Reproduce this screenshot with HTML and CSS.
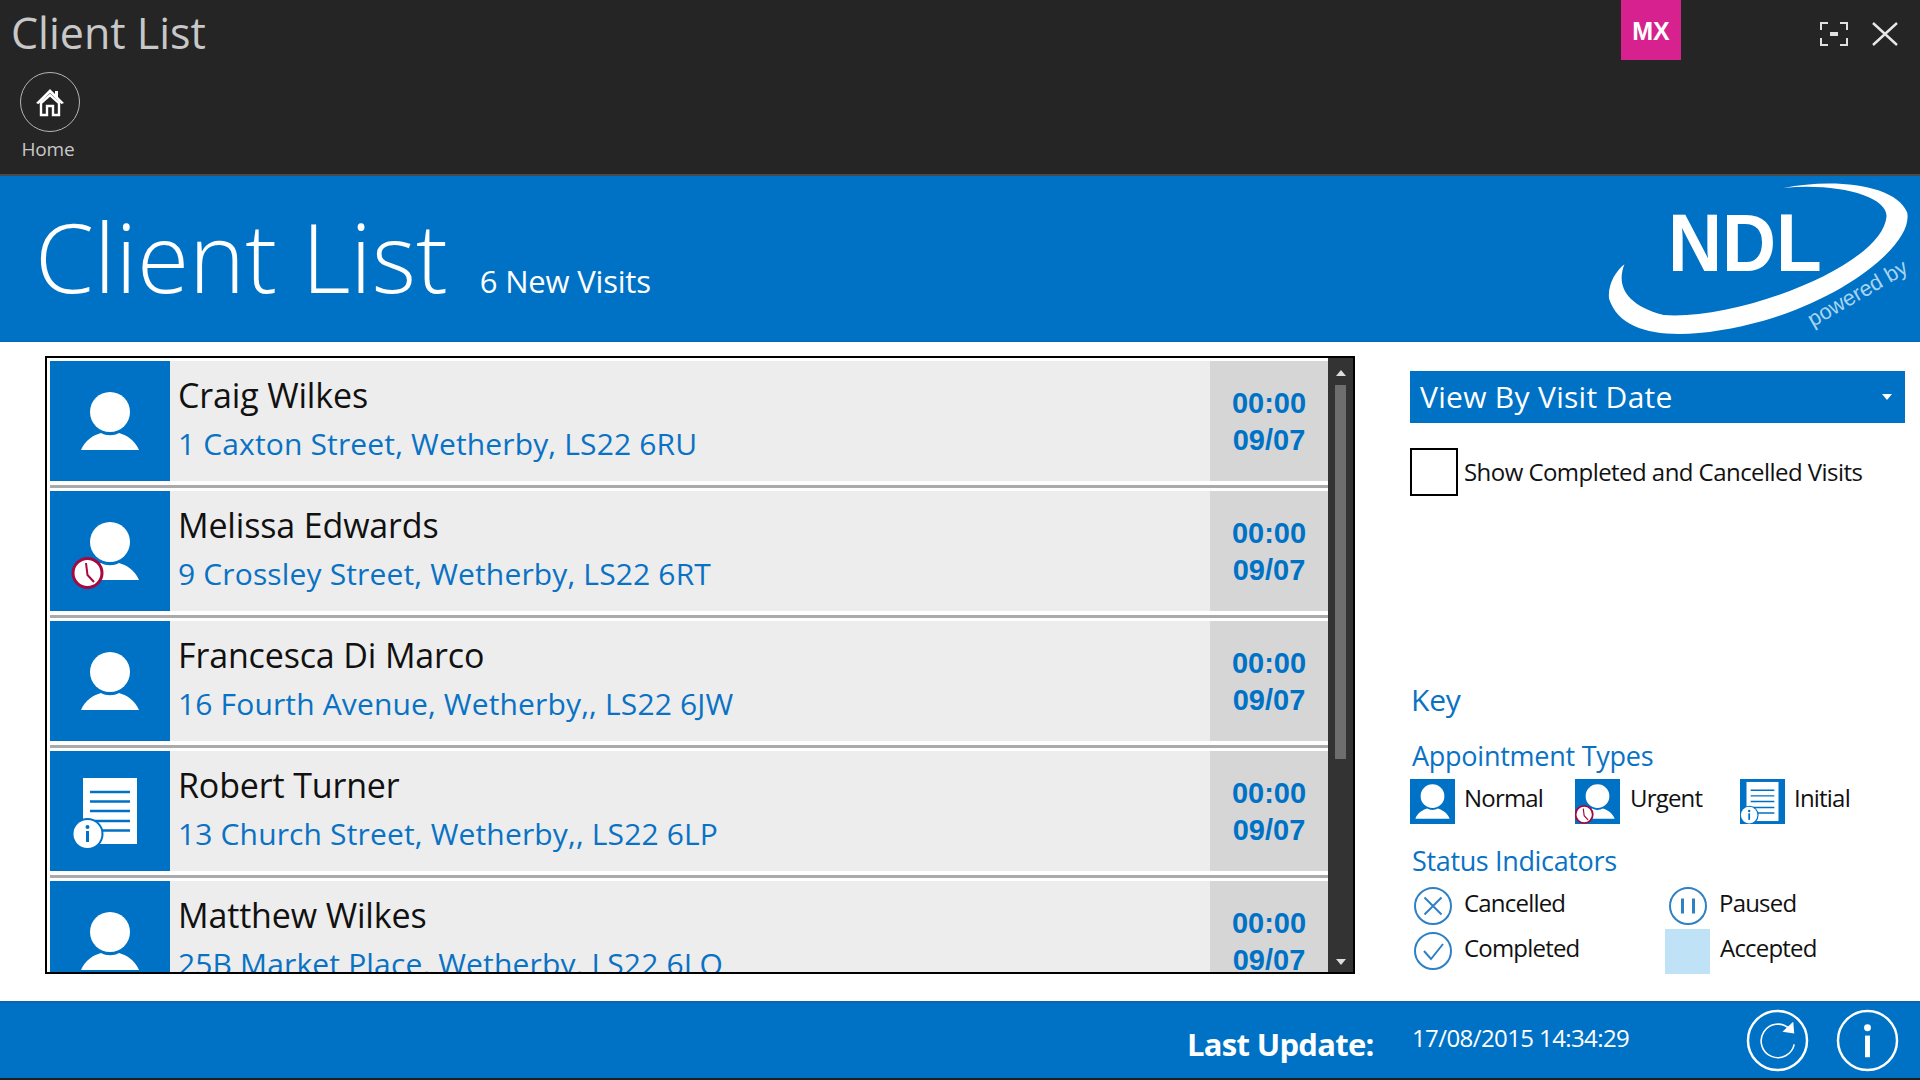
FILE: index.html
```html
<!DOCTYPE html>
<html lang="en">
<head>
    <meta charset="UTF-8">
    <title>Client List</title>
    <link rel="stylesheet" href="styles.css">
</head>
<body>

<!-- shared icon shapes -->
<svg class="icon-defs" width="0" height="0">
    <defs>
        <g id="person">
            <circle cx="60" cy="51" r="20" fill="#fff"/>
            <path d="M31 89 C35 79 44 74 51 72 C56 75 64 75 69 72 C76 74 85 79 89 89 Z" fill="#fff"/>
        </g>
        <g id="clock">
            <circle cx="37.5" cy="82" r="14.5" fill="#fff" stroke="#a6093d" stroke-width="3"/>
            <path d="M36 72 L37.5 84 L44 91" fill="none" stroke="#a6093d" stroke-width="2"/>
        </g>
        <g id="doc">
            <rect x="33" y="27" width="54" height="66" fill="#fff"/>
            <path d="M40 41 H80 M40 50.5 H80 M40 60 H80 M40 70 H80 M40 79.5 H80" stroke="#0072c6" stroke-width="2.5"/>
            <circle cx="37.5" cy="83" r="16" fill="#0072c6"/>
            <circle cx="37.5" cy="83" r="14" fill="#fff"/>
            <circle cx="37.5" cy="76" r="2" fill="#0072c6"/>
            <rect x="36" y="80" width="3" height="11" fill="#0072c6"/>
        </g>
    </defs>
</svg>

<div class="app">
    <div class="topbar">
        <div class="top-left">
            <div class="app-title">Client List</div>
            <div class="home-btn">
                <div class="home-circle">
                    <svg width="30" height="30" viewBox="0 0 30 30">
                        <path d="M15 2 L20 7 V4 H23 V10 L29 16 L26.5 17 L15 6 L3.5 17 L1 16 Z" fill="#fff"/>
                        <path d="M6 16 L15 8 L24 16 V28 H18 V19 H12 V28 H6 Z" fill="none" stroke="#fff" stroke-width="2.4"/>
                    </svg>
                </div>
                <div class="home-label">Home</div>
            </div>
        </div>
        <div class="top-right">
            <div class="user-badge">MX</div>
            <svg class="win-icon icon-full" width="28" height="24" viewBox="0 0 28 24">
                <path d="M1 8 V1 H8 M20 1 H27 V8 M1 16 V23 H8 M20 23 H27 V16" fill="none" stroke="#e0e0e0" stroke-width="2"/>
                <rect x="10" y="10" width="8" height="4" fill="#e0e0e0"/>
            </svg>
            <svg class="win-icon icon-close" width="26" height="24" viewBox="0 0 26 24">
                <path d="M1 1 L25 23 M25 1 L1 23" stroke="#e8e8e8" stroke-width="2.4"/>
            </svg>
        </div>
    </div>

    <div class="banner">
        <h1>Client List</h1>
        <span class="new-visits">6 New Visits</span>
        <svg class="logo" width="317" height="163" viewBox="150 530 950 490">
            <path d="M700 566 C850 535 1040 555 1072 640 C1090 730 900 890 640 965 C440 1020 220 1035 176 900 C170 860 195 815 222 795 C200 850 215 915 340 948 C560 965 1000 800 1010 650 C1010 590 860 550 700 566 Z" fill="#fff"/>
            <text class="logo-name" x="353" y="815" textLength="462" lengthAdjust="spacingAndGlyphs">NDL</text>
            <text class="logo-by" transform="translate(788 985) rotate(-30)">powered by</text>
        </svg>
    </div>

    <div class="main">
        <div class="visit-box">
            <div class="visit-list">
                <div class="visit">
                    <svg class="visit-icon" viewBox="0 0 120 120"><use href="#person"/></svg>
                    <div class="visit-info">
                        <div class="visit-name">Craig Wilkes</div>
                        <div class="visit-addr">1 Caxton Street, Wetherby, LS22 6RU</div>
                    </div>
                    <div class="visit-date">00:00<br>09/07</div>
                </div>
                <div class="visit">
                    <svg class="visit-icon" viewBox="0 0 120 120"><use href="#person"/><use href="#clock"/></svg>
                    <div class="visit-info">
                        <div class="visit-name">Melissa Edwards</div>
                        <div class="visit-addr">9 Crossley Street, Wetherby, LS22 6RT</div>
                    </div>
                    <div class="visit-date">00:00<br>09/07</div>
                </div>
                <div class="visit">
                    <svg class="visit-icon" viewBox="0 0 120 120"><use href="#person"/></svg>
                    <div class="visit-info">
                        <div class="visit-name">Francesca Di Marco</div>
                        <div class="visit-addr">16 Fourth Avenue, Wetherby,, LS22 6JW</div>
                    </div>
                    <div class="visit-date">00:00<br>09/07</div>
                </div>
                <div class="visit">
                    <svg class="visit-icon" viewBox="0 0 120 120"><use href="#doc"/></svg>
                    <div class="visit-info">
                        <div class="visit-name">Robert Turner</div>
                        <div class="visit-addr">13 Church Street, Wetherby,, LS22 6LP</div>
                    </div>
                    <div class="visit-date">00:00<br>09/07</div>
                </div>
                <div class="visit">
                    <svg class="visit-icon" viewBox="0 0 120 120"><use href="#person"/></svg>
                    <div class="visit-info">
                        <div class="visit-name">Matthew Wilkes</div>
                        <div class="visit-addr">25B Market Place, Wetherby, LS22 6LQ</div>
                    </div>
                    <div class="visit-date">00:00<br>09/07</div>
                </div>
            </div>
            <div class="scrollbar">
                <div class="arrow-up"></div>
                <div class="scroll-track"><div class="scroll-thumb"></div></div>
                <div class="arrow-down"></div>
            </div>
        </div>

        <div class="side">
            <div class="view-select">
                <span>View By Visit Date</span>
                <div class="caret"></div>
            </div>
            <div class="show-row">
                <div class="checkbox"></div>
                <span>Show Completed and Cancelled Visits</span>
            </div>

            <div class="key-title">Key</div>
            <div class="key-head">Appointment Types</div>
            <div class="type-row">
                <div class="type-item">
                    <svg class="type-icon" viewBox="22 22 76 76"><use href="#person"/></svg>
                    <span>Normal</span>
                </div>
                <div class="type-item type-urgent">
                    <svg class="type-icon" viewBox="22 22 76 76"><use href="#person"/><use href="#clock"/></svg>
                    <span>Urgent</span>
                </div>
                <div class="type-item type-initial">
                    <svg class="type-icon" viewBox="22 22 76 76"><use href="#doc"/></svg>
                    <span>Initial</span>
                </div>
            </div>
            <div class="key-head status-head">Status Indicators</div>
            <div class="status-grid">
                <div class="status-item">
                    <svg class="status-icon" viewBox="0 0 38 38">
                        <circle cx="19" cy="19" r="18" fill="none" stroke="#2f80c4" stroke-width="2"/>
                        <path d="M10.5 10.5 L27.5 27.5 M27.5 10.5 L10.5 27.5" stroke="#2f80c4" stroke-width="2"/>
                    </svg>
                    <span>Cancelled</span>
                </div>
                <div class="status-item">
                    <svg class="status-icon" viewBox="0 0 38 38">
                        <circle cx="19" cy="19" r="18" fill="none" stroke="#2f80c4" stroke-width="2"/>
                        <path d="M13.5 11.5 V26.5 M24.5 11.5 V26.5" stroke="#2f80c4" stroke-width="3"/>
                    </svg>
                    <span>Paused</span>
                </div>
                <div class="status-item">
                    <svg class="status-icon" viewBox="0 0 38 38">
                        <circle cx="19" cy="19" r="18" fill="none" stroke="#2f80c4" stroke-width="2"/>
                        <path d="M10 19 L17 27 L29 12" fill="none" stroke="#2f80c4" stroke-width="2"/>
                    </svg>
                    <span>Completed</span>
                </div>
                <div class="status-item">
                    <div class="accepted-swatch"></div>
                    <span>Accepted</span>
                </div>
            </div>
        </div>
    </div>

    <div class="footer">
        <span class="update-label">Last Update:</span>
        <span class="update-time">17/08/2015 14:34:29</span>
        <svg class="foot-btn foot-refresh" viewBox="0 0 64 64">
            <circle cx="32" cy="32" r="30" fill="none" stroke="#fff" stroke-width="2.5"/>
            <path d="M44 20 A17 17 0 1 0 49 36" fill="none" stroke="#fff" stroke-width="1.6"/>
            <path d="M37 23 L49 25 L48 13 Z" fill="#fff"/>
        </svg>
        <svg class="foot-btn" viewBox="0 0 64 64">
            <circle cx="32" cy="32" r="30" fill="none" stroke="#fff" stroke-width="2.5"/>
            <circle cx="32" cy="19" r="3.5" fill="#fff"/>
            <rect x="29.5" y="27" width="5" height="22" fill="#fff"/>
        </svg>
    </div>
</div>

</body>
</html>
```
FILE: styles.css
```css
/* Basic Reset */
* {
    margin: 0;
    padding: 0;
    box-sizing: border-box;
}
body {
    font-family: "Open Sans", "Noto Sans", sans-serif;
    background-color: #1e1e1e;
    overflow: hidden;
}
.icon-defs {
    position: absolute;
}
.app {
    width: 1920px;
    height: 1078px;
    display: flex;
    flex-direction: column;
}

/* Top bar */
.topbar {
    height: 176px;
    background-color: #252525;
    border-bottom: 2px solid #4a4a4a;
    display: flex;
    justify-content: space-between;
}
.app-title {
    font-size: 43px;
    line-height: 60px;
    margin: 3px 0 0 11px;
    color: #c8c8c8;
}
.home-btn {
    width: 96px;
    text-align: center;
}
.home-circle {
    width: 60px;
    height: 60px;
    margin: 9px 0 0 20px;
    border: 1.5px solid #b5b5b5;
    border-radius: 50%;
    display: flex;
    align-items: center;
    justify-content: center;
}
.home-label {
    font-size: 19px;
    line-height: 26px;
    margin-top: 4px;
    color: #c8c8c8;
    letter-spacing: -0.2px;
}
.top-right {
    display: flex;
    align-items: flex-start;
}
.user-badge {
    width: 60px;
    height: 60px;
    background-color: #d6218f;
    color: #fff;
    font-family: "Liberation Sans", sans-serif;
    font-size: 25px;
    font-weight: bold;
    line-height: 62px;
    text-align: center;
}
.win-icon {
    margin-top: 22px;
}
.icon-full {
    margin-left: 139px;
}
.icon-close {
    margin: 22px 22px 0 24px;
}

/* Blue banner */
.banner {
    height: 166px;
    background-color: #0072c6;
    border-bottom: 1px solid #0a66ad;
    display: flex;
    align-items: flex-end;
    color: #fff;
    position: relative;
}
.banner h1 {
    font-size: 95px;
    font-weight: 350;
    line-height: 120px;
    margin: 0 0 25px 35px;
}
.new-visits {
    font-size: 31px;
    line-height: 40px;
    margin: 0 0 40px 32px;
    letter-spacing: -0.2px;
}
.logo {
    position: absolute;
    left: 1600px;
    top: 0;
}
.logo-name {
    font-family: "Liberation Sans", sans-serif;
    font-size: 245px;
    font-weight: bold;
    fill: #fff;
}
.logo-by {
    font-family: "Liberation Sans", sans-serif;
    font-size: 65px;
    fill: #a8d4f0;
}

/* Main area */
.main {
    height: 659px;
    background-color: #fff;
    display: flex;
    align-items: flex-start;
}
.visit-box {
    width: 1310px;
    height: 618px;
    margin: 14px 0 0 45px;
    border: 2px solid #000;
    display: flex;
}
.visit-list {
    width: 1281px;
    height: 614px;
    padding: 3px 0 0 3px;
    overflow: hidden;
}
.visit {
    height: 120px;
    margin-bottom: 10px;
    background-color: #ededed;
    display: flex;
    position: relative;
}
.visit::after {
    content: "";
    position: absolute;
    left: 0;
    right: 0;
    top: 124px;
    height: 3px;
    background-color: #aaa;
}
.visit-icon {
    width: 120px;
    height: 120px;
    background-color: #0072c6;
    flex-shrink: 0;
}
.visit-info {
    flex: 1;
    padding-left: 8px;
}
.visit-name {
    font-size: 34px;
    line-height: 44px;
    margin-top: 12px;
    color: #111;
    letter-spacing: -0.15px;
}
.visit-addr {
    font-size: 30px;
    line-height: 40px;
    margin-top: 7px;
    color: #0a72c4;
    letter-spacing: 0.15px;
}
.visit-date {
    width: 118px;
    background-color: #d6d6d6;
    color: #0072c6;
    font-family: "Liberation Sans", sans-serif;
    font-size: 29px;
    font-weight: bold;
    line-height: 37px;
    text-align: center;
    padding-top: 24px;
}

/* Scrollbar */
.scrollbar {
    width: 25px;
    background-color: #333;
    display: flex;
    flex-direction: column;
    align-items: center;
    padding-top: 12px;
}
.arrow-up, .arrow-down {
    width: 0;
    height: 0;
    border-left: 5px solid transparent;
    border-right: 5px solid transparent;
}
.arrow-up {
    border-bottom: 6px solid #ddd;
}
.arrow-down {
    border-top: 6px solid #ddd;
}
.scroll-track {
    height: 570px;
    margin: 9px 0 4px;
}
.scroll-thumb {
    width: 11px;
    height: 374px;
    background-color: #6e6e6e;
}

/* Right hand column */
.side {
    width: 495px;
    margin: 29px 0 0 55px;
}
.view-select {
    height: 52px;
    background-color: #0072c6;
    color: #fff;
    font-size: 30px;
    line-height: 56px;
    letter-spacing: 0.3px;
    padding-left: 10px;
    display: flex;
    justify-content: space-between;
    align-items: center;
}
.caret {
    width: 0;
    height: 0;
    margin-right: 13px;
    border-left: 5px solid transparent;
    border-right: 5px solid transparent;
    border-top: 6px solid #fff;
}
.show-row {
    display: flex;
    align-items: center;
    gap: 6px;
    margin-top: 25px;
    font-size: 24px;
    letter-spacing: -0.55px;
    color: #111;
}
.show-row span {
    margin-bottom: 2px;
}
.checkbox {
    width: 48px;
    height: 48px;
    border: 2px solid #000;
}
.key-title {
    font-size: 30px;
    line-height: 40px;
    margin: 184px 0 0 1px;
    color: #0a72c4;
    letter-spacing: -0.2px;
}
.key-head {
    font-size: 27px;
    line-height: 36px;
    margin: 18px 0 0 2px;
    color: #0a72c4;
    letter-spacing: -0.25px;
}
.status-head {
    margin-top: 19px;
    letter-spacing: -0.35px;
}
.type-row {
    display: flex;
    margin-top: 5px;
}
.type-item {
    display: flex;
    align-items: center;
    width: 165px;
    font-size: 24px;
    letter-spacing: -0.8px;
    color: #111;
}
.type-item span {
    margin: 0 0 8px 9px;
}
.type-urgent span {
    margin-left: 10px;
}
.type-icon {
    width: 45px;
    height: 45px;
    background-color: #0072c6;
}
.status-grid {
    display: grid;
    grid-template-columns: 255px 1fr;
    row-gap: 7px;
    margin: 8px 0 0 4px;
}
.status-item {
    display: flex;
    align-items: center;
    height: 38px;
    font-size: 24px;
    letter-spacing: -0.8px;
    color: #111;
}
.status-item span {
    margin: 0 0 8px 12px;
}
.status-icon {
    width: 38px;
    height: 38px;
}
.accepted-swatch {
    width: 45px;
    height: 45px;
    margin-left: -4px;
    background-color: #c0e2f7;
}
.status-item:nth-child(4) span {
    margin-left: 10px;
}

/* Footer */
.footer {
    height: 77px;
    background-color: #0072c6;
    border-top: 2px solid #0a66ad;
    color: #fff;
    display: flex;
    align-items: center;
    padding-left: 1187px;
}
.update-label {
    font-size: 31px;
    font-weight: 700;
    letter-spacing: -0.7px;
    width: 225px;
    margin-top: 6px;
}
.update-time {
    font-size: 24px;
    letter-spacing: -0.6px;
    margin-bottom: 6px;
    width: 334px;
}
.foot-btn {
    width: 63px;
    height: 63px;
}
.foot-refresh {
    margin-right: 27px;
}
```
